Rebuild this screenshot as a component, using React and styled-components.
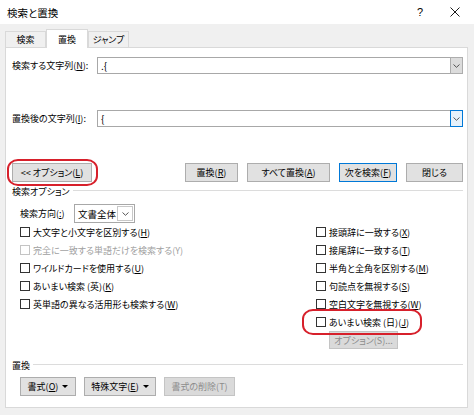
import React from 'react';
import styled, { createGlobalStyle, css } from 'styled-components';

const GlobalStyle = createGlobalStyle`
  html, body {
    margin: 0;
    padding: 0;
    background: #f0f0f0;
  }
  body {
    font-family: "Noto Sans CJK JP", "Noto Sans", sans-serif;
    font-size: 9px;
    color: #000;
  }
`;

const Dialog = styled.div`
  width: 474px;
  height: 415px;
  background: #f0f0f0;
  overflow: hidden;
  display: flex;
  flex-direction: column;
  font-feature-settings: "palt";
`;

//TITLE BAR
const TitleBar = styled.div`
  height: 24px;
  background: #fff;
  display: flex;
  align-items: center;
  padding: 0 7px 0 7px;
`;

const Title = styled.div`
  flex: 1;
  font-size: 10.5px;
`;

const TitleBtn = styled.div`
  width: 24px;
  height: 24px;
  display: flex;
  align-items: center;
  justify-content: center;
  font-family: "Liberation Sans", sans-serif;
  font-size: 11px;
  margin-left: ${p => p.$gap || 0}px;
`;

//TABS
const Body = styled.div`
  padding: 5px 6px 0 5px;
`;

const TabStrip = styled.div`
  display: flex;
  align-items: flex-end;
  height: 18px;
`;

const Tab = styled.div`
  box-sizing: border-box;
  width: ${p => p.$w}px;
  height: 16px;
  border: 1px solid #d9d9d9;
  border-bottom: none;
  background: #f0f0f0;
  display: flex;
  align-items: center;
  justify-content: center;
  ${p => p.$active && css`
    height: 19px;
    background: #fff;
    margin-bottom: -1px;
    position: relative;
    z-index: 1;
  `}
`;

const Panel = styled.div`
  box-sizing: border-box;
  height: 361px;
  background: #fff;
  border: 1px solid #d9d9d9;
  padding: 0 4px 0 6px;
  display: flex;
  flex-direction: column;
`;

//FIND / REPLACE FIELDS
const FieldRow = styled.div`
  display: grid;
  grid-template-columns: 85px 1fr;
  align-items: center;
  margin-top: ${p => p.$top}px;
`;

const Key = styled.span`
  text-decoration: underline;
`;

const Combo = styled.div`
  box-sizing: border-box;
  height: 17px;
  border: 1px solid #a8a8a8;
  display: flex;
  align-items: stretch;
  background: #fff;
`;

const ComboText = styled.div`
  flex: 1;
  display: flex;
  align-items: center;
  padding-left: 3px;
  font-size: ${p => p.$size || 10}px;
  white-space: nowrap;
`;

const DropBtn = styled.div`
  box-sizing: border-box;
  width: ${p => p.$w || 13}px;
  margin: -1px -1px -1px 0;
  border: 1px solid #adadad;
  background: #dcdcdc;
  display: flex;
  align-items: center;
  justify-content: center;
  ${p => p.$focus && css`
    border-color: #0078d7;
    background: #e5f1fb;
  `}
  ${p => p.$plain && css`
    background: #fff;
    border-color: #c8c8c8;
    margin: 1px 1px 1px 0;
  `}
`;

const Chevron = () => (
  <svg width="7" height="4" viewBox="0 0 7 4">
    <path d="M0.5 0.5 L3.5 3.3 L6.5 0.5" fill="none" stroke="#444" strokeWidth="0.9" />
  </svg>
);

//BUTTONS
const ButtonRow = styled.div`
  display: flex;
  align-items: center;
  gap: ${p => p.$gap || 0}px;
  margin-top: ${p => p.$top || 0}px;
  margin-left: ${p => p.$left || 0}px;
`;

const ButtonGroup = styled.div`
  display: flex;
  margin-left: auto;
  gap: 9px;
`;

const Button = styled.div`
  box-sizing: border-box;
  width: ${p => p.$w}px;
  height: ${p => p.$h || 19}px;
  border: 1px solid #adadad;
  background: #e1e1e1;
  display: flex;
  align-items: center;
  justify-content: center;
  gap: 4px;
  white-space: nowrap;
  margin-left: ${p => p.$left || 0}px;
  ${p => p.$default && css`
    border-color: #0078d7;
  `}
  ${p => p.$disabled && css`
    color: #8c8c8c;
    border-color: #c4c4c4;
    background: #dadada;
  `}
`;

const Caret = styled.span`
  width: 0;
  height: 0;
  border-left: 3px solid transparent;
  border-right: 3px solid transparent;
  border-top: 3px solid #000;
`;

const Highlight = styled.div`
  position: relative;
  width: fit-content;
  &::after {
    content: "";
    position: absolute;
    top: ${p => p.$t}px;
    bottom: ${p => p.$b}px;
    left: ${p => p.$l}px;
    right: ${p => p.$r}px;
    border: 2px solid #d7202b;
    border-radius: 11px / 10px;
    pointer-events: none;
  }
`;

//GROUP HEADER
const GroupHeader = styled.div`
  display: flex;
  align-items: center;
  gap: 3px;
  height: 12px;
  margin-top: ${p => p.$top}px;
  &::after {
    content: "";
    flex: 1;
    border-top: 1px solid #dcdcdc;
    margin-top: -1px;
  }
`;

//OPTIONS
const DirectionRow = styled.div`
  display: flex;
  align-items: center;
  margin: 7px 0 0 8px;
`;

const DirLabel = styled.div`
  width: 54px;
`;

const Select = styled.div`
  box-sizing: border-box;
  width: 61px;
  height: 19px;
  border: 1px solid #a8a8a8;
  display: flex;
  align-items: stretch;
`;

const OptionGrid = styled.div`
  display: grid;
  grid-template-columns: 296px 1fr;
  margin-left: 8px;
`;

const OptionCol = styled.div`
  display: flex;
  flex-direction: column;
`;

const OptionRow = styled.div`
  display: flex;
  align-items: center;
  gap: 3px;
  height: 18px;
  white-space: nowrap;
  color: ${p => (p.$disabled ? '#a0a0a0' : '#000')};
`;

const CheckBox = styled.span`
  box-sizing: border-box;
  width: 10px;
  height: 10px;
  border: 1px solid ${p => (p.$disabled ? '#c4c4c4' : '#333')};
  background: #fff;
  flex-shrink: 0;
`;

const CloseIcon = () => (
  <svg width="10" height="10" viewBox="0 0 10 10">
    <path d="M0.5 0.5 L9.5 9.5 M9.5 0.5 L0.5 9.5" stroke="#000" strokeWidth="0.9" />
  </svg>
);

const Option = ({ children, disabled }) => (
  <OptionRow $disabled={disabled}>
    <CheckBox $disabled={disabled} />
    <span>{children}</span>
  </OptionRow>
);

const App = () => {
  return <Dialog>
    <GlobalStyle />
    <TitleBar>
      <Title>検索と置換</Title>
      <TitleBtn>?</TitleBtn>
      <TitleBtn $gap={11}><CloseIcon /></TitleBtn>
    </TitleBar>

    <Body>
      <TabStrip>
        <Tab $w={41}>検索</Tab>
        <Tab $w={42} $active>置換</Tab>
        <Tab $w={41}>ジャンプ</Tab>
      </TabStrip>

      <Panel>
        <FieldRow $top={9}>
          <span>検索する文字列(<Key>N</Key>):</span>
          <Combo>
            <ComboText>.{'{'}</ComboText>
            <DropBtn><Chevron /></DropBtn>
          </Combo>
        </FieldRow>

        <FieldRow $top={36}>
          <span>置換後の文字列(<Key>I</Key>):</span>
          <Combo>
            <ComboText>{'{'}</ComboText>
            <DropBtn $focus><Chevron /></DropBtn>
          </Combo>
        </FieldRow>

        <ButtonRow $top={36}>
          <Highlight $t={-4} $b={-4} $l={-5} $r={-6}>
            <Button $w={80}><span>&lt;&lt; オプション(<Key>L</Key>)</span></Button>
          </Highlight>
          <ButtonGroup>
            <Button $w={53}><span>置換(<Key>R</Key>)</span></Button>
            <Button $w={83}><span>すべて置換(<Key>A</Key>)</span></Button>
            <Button $w={58} $default><span>次を検索(<Key>F</Key>)</span></Button>
            <Button $w={57}><span>閉じる</span></Button>
          </ButtonGroup>
        </ButtonRow>

        <GroupHeader $top={3}>検索オプション</GroupHeader>

        <DirectionRow>
          <DirLabel>検索方向(<Key>:</Key>)</DirLabel>
          <Select>
            <ComboText $size={9.5}>文書全体</ComboText>
            <DropBtn $plain $w={16}><Chevron /></DropBtn>
          </Select>
        </DirectionRow>

        <OptionGrid>
          <OptionCol>
            <Option>大文字と小文字を区別する(<Key>H</Key>)</Option>
            <Option disabled>完全に一致する単語だけを検索する(Y)</Option>
            <Option>ワイルドカードを使用する(<Key>U</Key>)</Option>
            <Option>あいまい検索 (英)(<Key>K</Key>)</Option>
            <Option>英単語の異なる活用形も検索する(<Key>W</Key>)</Option>
          </OptionCol>
          <OptionCol>
            <Option>接頭辞に一致する(<Key>X</Key>)</Option>
            <Option>接尾辞に一致する(<Key>T</Key>)</Option>
            <Option>半角と全角を区別する(<Key>M</Key>)</Option>
            <Option>句読点を無視する(<Key>S</Key>)</Option>
            <Option>空白文字を無視する(<Key>W</Key>)</Option>
            <Highlight $t={-4} $b={-4} $l={-14} $r={-13}>
              <Option>あいまい検索 (日)(<Key>J</Key>)</Option>
            </Highlight>
            <Button $w={69} $h={18} $left={13} $disabled><span>オプション(S)...</span></Button>
          </OptionCol>
        </OptionGrid>

        <GroupHeader $top={10}>置換</GroupHeader>

        <ButtonRow $top={6} $left={8} $gap={8}>
          <Button $w={56}><span>書式(<Key>O</Key>)</span><Caret /></Button>
          <Button $w={72}><span>特殊文字(<Key>E</Key>)</span><Caret /></Button>
          <Button $w={71} $disabled><span>書式の削除(T)</span></Button>
        </ButtonRow>
      </Panel>
    </Body>
  </Dialog>
}

export default App;
